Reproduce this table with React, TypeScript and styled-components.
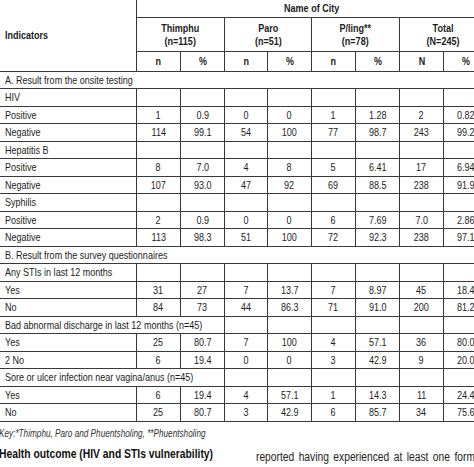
import React from "react";
import styled, { createGlobalStyle } from "styled-components";

const Global = createGlobalStyle`
  html, body { margin: 0; padding: 0; background: #fff; }
  body { width: 474px; height: 467px; overflow: hidden; }
`;

const FONT = `"Liberation Sans Narrow", "Arial Narrow", "Liberation Sans", Arial, sans-serif`;

const Page = styled.div`
  width: 474px;
  height: 467px;
  overflow: hidden;
  font-family: ${FONT};
  color: #1c1c1c;
`;

const Narrow = styled.span<{ $origin?: string }>`
  display: inline-block;
  white-space: nowrap;
  transform: scaleX(0.82);
  transform-origin: ${(p) => p.$origin ?? "center"};
`;

const Table = styled.table`
  border-collapse: collapse;
  table-layout: fixed;
  width: 488px;
  margin: -1px 0 0 -1px;
  font-size: 11px;
`;

const Cell = styled.td<{ $bold?: boolean; $left?: boolean }>`
  border: 1px solid #3a3a3a;
  padding: 0;
  padding-left: ${(p) => (p.$left ? "5px" : "0")};
  text-align: ${(p) => (p.$left ? "left" : "center")};
  vertical-align: middle;
  font-weight: ${(p) => (p.$bold ? "bold" : "normal")};
  line-height: 13px;
  white-space: nowrap;
  overflow: visible;
`;

const Row = styled.tr<{ $h: number }>`
  height: ${(p) => p.$h}px;
`;

const Key = styled.div`
  margin: 6px 0 0 -1px;
  font-size: 10px;
  font-style: italic;
  line-height: 12px;
  color: #333;
`;

const Bottom = styled.div`
  display: flex;
  margin-top: 7px;
  margin-left: -1px;
`;

const Heading = styled.div`
  width: 257px;
  flex: none;
  font-weight: bold;
  font-size: 12.6px;
  line-height: 15px;
  color: #111;
  white-space: nowrap;
`;

const Para = styled.div`
  font-size: 12.5px;
  line-height: 15px;
  word-spacing: 2px;
  white-space: nowrap;
  margin-top: 3px;
  color: #222;
`;

type Data = { kind: "data"; label: string; values: string[] };
type Sec = { kind: "section"; label: string };
type Grp = { kind: "group"; label: string; wide?: boolean };
type R = Data | Sec | Grp;

const rows: R[] = [
  { kind: "section", label: "A. Result from the onsite testing" },
  { kind: "group", label: "HIV" },
  { kind: "data", label: "Positive", values: ["1", "0.9", "0", "0", "1", "1.28", "2", "0.82"] },
  { kind: "data", label: "Negative", values: ["114", "99.1", "54", "100", "77", "98.7", "243", "99.2"] },
  { kind: "group", label: "Hepatitis B" },
  { kind: "data", label: "Positive", values: ["8", "7.0", "4", "8", "5", "6.41", "17", "6.94"] },
  { kind: "data", label: "Negative", values: ["107", "93.0", "47", "92", "69", "88.5", "238", "91.9"] },
  { kind: "group", label: "Syphilis" },
  { kind: "data", label: "Positive", values: ["2", "0.9", "0", "0", "6", "7.69", "7.0", "2.86"] },
  { kind: "data", label: "Negative", values: ["113", "98.3", "51", "100", "72", "92.3", "238", "97.1"] },
  { kind: "section", label: "B. Result from the survey questionnaires" },
  { kind: "group", label: "Any STIs in last 12 months" },
  { kind: "data", label: "Yes", values: ["31", "27", "7", "13.7", "7", "8.97", "45", "18.4"] },
  { kind: "data", label: "No", values: ["84", "73", "44", "86.3", "71", "91.0", "200", "81.2"] },
  { kind: "group", label: "Bad abnormal discharge in last 12 months (n=45)", wide: true },
  { kind: "data", label: "Yes", values: ["25", "80.7", "7", "100", "4", "57.1", "36", "80.0"] },
  { kind: "data", label: "2 No", values: ["6", "19.4", "0", "0", "3", "42.9", "9", "20.0"] },
  { kind: "group", label: "Sore or ulcer infection near vagina/anus (n=45)", wide: true },
  { kind: "data", label: "Yes", values: ["6", "19.4", "4", "57.1", "1", "14.3", "11", "24.4"] },
  { kind: "data", label: "No", values: ["25", "80.7", "3", "42.9", "6", "85.7", "34", "75.6"] },
];

const cities = [
  ["Thimphu", "(n=115)"],
  ["Paro", "(n=51)"],
  ["P/ling**", "(n=78)"],
  ["Total", "(N=245)"],
];

const colWidths = [137, 44, 44, 43, 44, 44, 44, 44, 44];

export default function App() {
  return (
    <Page>
      <Global />
      <Table>
        <colgroup>
          {colWidths.map((w, i) => (
            <col key={i} style={{ width: w }} />
          ))}
        </colgroup>
        <thead>
          <Row $h={18}>
            <Cell as="th" rowSpan={3} $left $bold>
              <Narrow $origin="left">Indicators</Narrow>
            </Cell>
            <Cell as="th" colSpan={8} $bold>
              <Narrow>Name of City</Narrow>
            </Cell>
          </Row>
          <Row $h={34}>
            {cities.map(([c, n]) => (
              <Cell as="th" key={c} colSpan={2} $bold>
                <Narrow>
                  {c}
                  <br />
                  {n}
                </Narrow>
              </Cell>
            ))}
          </Row>
          <Row $h={20}>
            {["n", "%", "n", "%", "n", "%", "N", "%"].map((h, i) => (
              <Cell as="th" key={i} $bold>
                <Narrow>{h}</Narrow>
              </Cell>
            ))}
          </Row>
        </thead>
        <tbody>
          {rows.map((r, i) => {
            const h = i % 2 === 0 ? 17 : 18;
            if (r.kind === "section")
              return (
                <Row $h={h} key={i}>
                  <Cell colSpan={9} $left>
                    <Narrow $origin="left">{r.label}</Narrow>
                  </Cell>
                </Row>
              );
            if (r.kind === "group")
              return (
                <Row $h={h} key={i}>
                  <Cell colSpan={r.wide ? 3 : 1} $left>
                    <Narrow $origin="left">{r.label}</Narrow>
                  </Cell>
                  {Array.from({ length: r.wide ? 6 : 8 }).map((_, j) => (
                    <Cell key={j} />
                  ))}
                </Row>
              );
            return (
              <Row $h={h} key={i}>
                <Cell $left>
                  <Narrow $origin="left">{r.label}</Narrow>
                </Cell>
                {r.values.map((v, j) => (
                  <Cell key={j}>
                    <Narrow>{v}</Narrow>
                  </Cell>
                ))}
              </Row>
            );
          })}
        </tbody>
      </Table>
      <Key>
        <Narrow $origin="left">Key:*Thimphu, Paro and Phuentsholing, **Phuentsholing</Narrow>
      </Key>
      <Bottom>
        <Heading>
          <Narrow $origin="left">Health outcome (HIV and STIs vulnerability)</Narrow>
        </Heading>
        <Para>
          <Narrow $origin="left">reported having experienced at least one form</Narrow>
        </Para>
      </Bottom>
    </Page>
  );
}
